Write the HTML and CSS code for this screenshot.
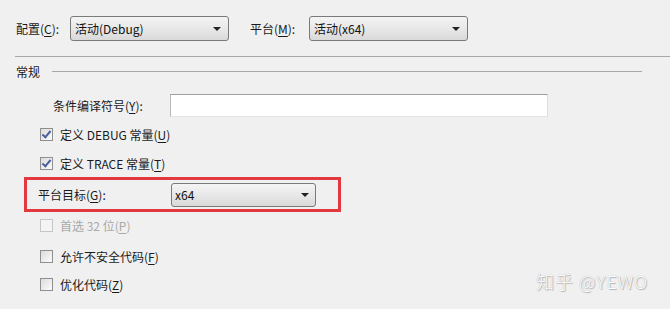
FILE: index.html
```html
<!DOCTYPE html>
<html lang="zh-CN">
    <head>
        <meta charset="UTF-8" />
        <title>生成</title>
        <link rel="stylesheet" href="styles.css">
    </head>
    <body>
        <div class="page">
            <div class="toolbar">
                <label class="lbl-config">配置(<u>C</u>):</label>
                <div class="combo combo-top"><span>活动(Debug)</span><i class="arrow"></i></div>
                <label class="lbl-platform">平台(<u>M</u>):</label>
                <div class="combo combo-top"><span>活动(x64)</span><i class="arrow"></i></div>
            </div>
            <div class="separator"></div>

            <div class="group-title">
                <span>常规</span>
                <div class="group-line"></div>
            </div>

            <div class="field-row">
                <label class="field-label">条件编译符号(<u>Y</u>):</label>
                <div class="textbox"></div>
            </div>

            <div class="check-row row-debug">
                <span class="check checked"></span>
                <span>定义 DEBUG 常量(<u>U</u>)</span>
            </div>
            <div class="check-row row-trace">
                <span class="check checked"></span>
                <span>定义 TRACE 常量(<u>T</u>)</span>
            </div>

            <div class="highlight">
                <label class="target-label">平台目标(<u>G</u>):</label>
                <div class="combo combo-target"><span>x64</span><i class="arrow"></i></div>
            </div>

            <div class="check-row row-prefer disabled">
                <span class="check"></span>
                <span>首选 32 位(<u>P</u>)</span>
            </div>
            <div class="check-row row-unsafe">
                <span class="check"></span>
                <span>允许不安全代码(<u>F</u>)</span>
            </div>
            <div class="check-row row-optimize">
                <span class="check"></span>
                <span>优化代码(<u>Z</u>)</span>
            </div>
        </div>
        <div class="watermark">知乎 @YEWO</div>
    </body>
</html>
```

FILE: styles.css
```css
body {
    margin: 0;
    background-color: #f0f0f0;
    font-family: "Noto Sans CJK SC", "Noto Sans", sans-serif;
    font-size: 12px;
    color: #1a1a1a;
    width: 670px;
    height: 309px;
    overflow: hidden;
    position: relative;
}
u {
    text-decoration: underline;
    text-underline-offset: 2px;
}
.toolbar {
    display: flex;
    align-items: center;
    height: 25px;
    padding: 16px 0 0 16px;
}
.lbl-config {
    width: 54px;
}
.lbl-platform {
    width: 59px;
    margin-left: 21px;
}
.combo {
    display: flex;
    align-items: center;
    justify-content: space-between;
    box-sizing: border-box;
    border: 1px solid #7a7a7a;
    border-radius: 3px;
    background: linear-gradient(#f4f4f4, #e8e8e8 50%, #d9d9d9);
    padding: 0 7px 0 4px;
    color: #111;
}
.combo-top {
    width: 159px;
    height: 25px;
}
.arrow {
    width: 0;
    height: 0;
    border-left: 4px solid transparent;
    border-right: 4px solid transparent;
    border-top: 4px solid #222;
}
.separator {
    height: 1px;
    margin: 15px 0 0 15px;
    background: #a8a8a8;
}
.group-title {
    display: flex;
    align-items: center;
    height: 28px;
    padding-left: 16px;
    padding-right: 28px;
}
.group-line {
    flex: 1;
    height: 1px;
    margin-left: 12px;
    background: #a8a8a8;
}
.field-row {
    display: flex;
    align-items: center;
    margin-top: 9px;
    height: 23px;
    padding-left: 53px;
}
.field-label {
    width: 117px;
}
.textbox {
    box-sizing: border-box;
    width: 378px;
    height: 23px;
    background: #fff;
    border: 1px solid #b8b8b8;
    border-top-color: #a0a0a0;
    border-right-color: #dcdcdc;
    border-bottom-color: #e4e4e4;
}
.check-row {
    display: flex;
    align-items: center;
    height: 20px;
    padding-left: 40px;
}
.check {
    box-sizing: border-box;
    width: 13px;
    height: 13px;
    margin-right: 7px;
    border: 1px solid #8e8f8f;
    background: linear-gradient(135deg, #dcdcdc, #fbfbfb);
    position: relative;
}
.check.checked::after {
    content: "";
    position: absolute;
    left: 3px;
    top: 0px;
    width: 3px;
    height: 7px;
    border-right: 2px solid #4a6299;
    border-bottom: 2px solid #4a6299;
    transform: rotate(40deg);
}
.row-debug {
    margin-top: 7px;
}
.row-trace {
    margin-top: 9px;
}
.highlight {
    display: flex;
    align-items: center;
    box-sizing: border-box;
    width: 317px;
    height: 35px;
    margin: 4px 0 0 24px;
    border: 3px solid #e2383f;
    padding-left: 11px;
}
.target-label {
    width: 133px;
}
.combo-target {
    width: 145px;
    height: 24px;
    padding-left: 3px;
    padding-right: 6px;
}
.row-prefer {
    margin-top: 3px;
}
.disabled {
    color: #a9a9a9;
}
.disabled .check {
    border-color: #c6c6c6;
    background: #f4f4f4;
}
.row-unsafe {
    margin-top: 11px;
}
.row-optimize {
    margin-top: 8px;
}
.watermark {
    position: absolute;
    left: 536px;
    top: 268px;
    font-size: 18px;
    font-weight: 300;
    letter-spacing: 1px;
    color: #ffffff;
    text-shadow: 0 0 1px #a0a0a0, 1px 1px 1px #b4b4b4;
}
```
